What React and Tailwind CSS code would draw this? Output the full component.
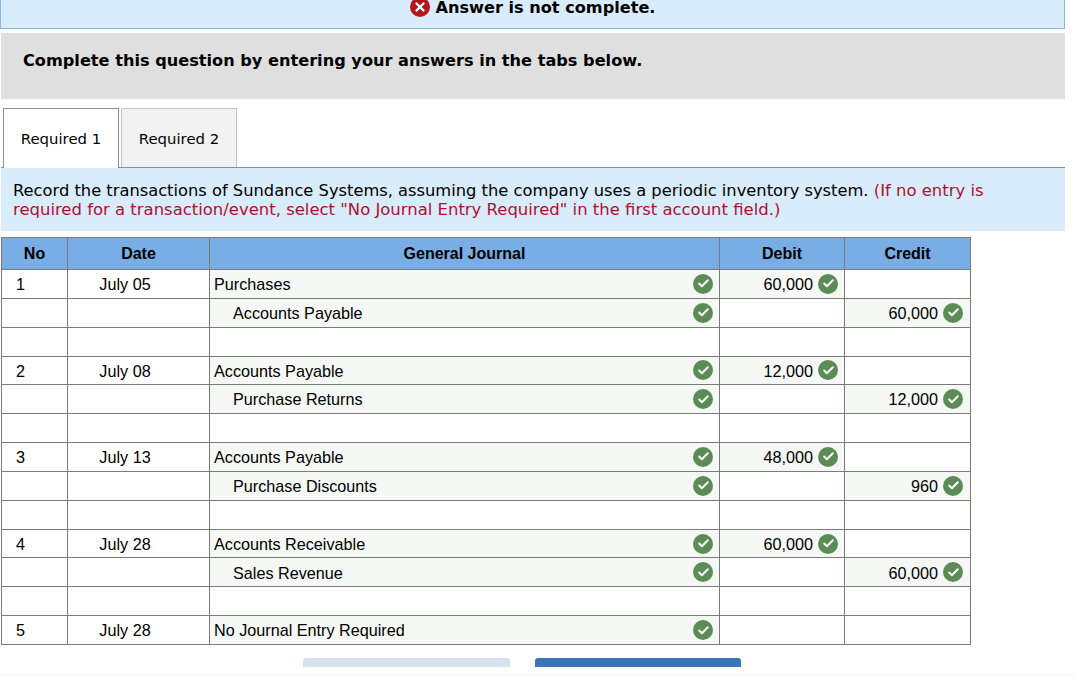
import { X, Check } from "lucide-react";

const entries = [
  { no: "1", date: "July 05", account: "Purchases", debit: "60,000" },
  { account: "Accounts Payable", indent: true, credit: "60,000" },
  {},
  { no: "2", date: "July 08", account: "Accounts Payable", debit: "12,000" },
  { account: "Purchase Returns", indent: true, credit: "12,000" },
  {},
  { no: "3", date: "July 13", account: "Accounts Payable", debit: "48,000" },
  { account: "Purchase Discounts", indent: true, credit: "960" },
  {},
  { no: "4", date: "July 28", account: "Accounts Receivable", debit: "60,000" },
  { account: "Sales Revenue", indent: true, credit: "60,000" },
  {},
  { no: "5", date: "July 28", account: "No Journal Entry Required" },
];

const OkIcon = () => (
  <span className="inline-flex h-[20px] w-[20px] shrink-0 items-center justify-center rounded-full bg-[#5b8c55]">
    <Check size={13} strokeWidth={3.5} className="text-white" />
  </span>
);

const AmountCell = ({ value, padding }) => (
  <td className={`border border-[#7b7b7b] p-0 ${value ? "bg-[#f5f8f4]" : ""}`}>
    {value && (
      <div className={`flex items-center justify-end gap-[5px] ${padding}`}>
        <span className="pt-[0.6px]">{value}</span>
        <OkIcon />
      </div>
    )}
  </td>
);

const App = () => {
  return (
    <div className="h-[677px] w-[1076px] overflow-hidden bg-white font-['Liberation_Sans',Arial,sans-serif] text-black">
      <div className="w-[1065px]">
        {/* result banner */}
        <div className="flex h-[29px] items-start justify-center border-x border-b border-[#8db8de] bg-[#d9ecfb] pl-[1px] font-['DejaVu_Sans',sans-serif] text-[16.15px] leading-[15px] font-bold">
          <span className="mr-[5px] inline-flex h-[20px] w-[20px] -translate-y-[3px] items-center justify-center rounded-full bg-[#b3161b]">
            <X size={14} strokeWidth={4} className="text-white" />
          </span>
          <span>Answer is not complete.</span>
        </div>

        <div className="mt-[4px] ml-[1px] flex h-[66px] items-center bg-[#dfdfdf] pb-[9px] pl-[22px] font-['DejaVu_Sans',sans-serif] text-[16.16px] font-bold">
          Complete this question by entering your answers in the tabs below.
        </div>

        {/* tabs */}
        <div className="mt-[9px] ml-[1px] flex h-[60px] gap-[2px] border-b border-[#8e8e8e] pl-[2px] font-['DejaVu_Sans',sans-serif] text-[14.9px]">
          <div className="-mb-[1px] flex h-[60px] w-[116px] items-center justify-center border-x border-t border-[#8e8e8e] bg-white pt-[2px]">
            Required 1
          </div>
          <div className="flex h-[59px] w-[116px] items-center justify-center border-x border-t border-[#c4c4c4] bg-[#f2f2f2] pt-[3px]">
            Required 2
          </div>
        </div>

        <div className="ml-[1px] h-[63px] bg-[#d9ecfb] pt-[13px] pr-[20px] pl-[12px] font-['DejaVu_Sans',sans-serif] text-[16.3px] leading-[19px]">
          Record the transactions of Sundance Systems, assuming the company uses a periodic inventory system.{" "}
          <span className="text-[16.47px] text-[#b01030]">
            (If no entry is required for a transaction/event, select "No Journal Entry Required" in the first account field.)
          </span>
        </div>

        {/* journal table */}
        <table className="mt-[6px] ml-[1px] w-[970px] table-fixed border-collapse text-[16.2px]">
          <colgroup>
            <col className="w-[66px]" />
            <col className="w-[142px]" />
            <col className="w-[510px]" />
            <col className="w-[125px]" />
            <col className="w-[126px]" />
          </colgroup>
          <thead>
            <tr className="h-[32px] bg-[#78ade6] text-[16px] font-bold">
              <th className="border border-[#7b7b7b] p-0">No</th>
              <th className="border border-[#7b7b7b] p-0">Date</th>
              <th className="border border-[#7b7b7b] p-0">General Journal</th>
              <th className="border border-[#7b7b7b] p-0">Debit</th>
              <th className="border border-[#7b7b7b] p-0">Credit</th>
            </tr>
          </thead>
          <tbody>
            {entries.map((row, index) => (
              <tr key={index} className="h-[28.85px]">
                <td className="border border-[#7b7b7b] p-0 pt-[0.6px] pl-[14px]">{row.no}</td>
                <td className="border border-[#7b7b7b] p-0 pt-[0.6px] pr-[27px] text-center">{row.date}</td>
                <td className={`border border-[#7b7b7b] p-0 ${row.account ? "bg-[#f5f8f4]" : ""}`}>
                  {row.account && (
                    <div className="flex items-center justify-between pr-[6px]">
                      <span className={`pt-[0.6px] ${row.indent ? "pl-[23px]" : "pl-[4px]"}`}>{row.account}</span>
                      <OkIcon />
                    </div>
                  )}
                </td>
                <AmountCell value={row.debit} padding="pr-[6px]" />
                <AmountCell value={row.credit} padding="pr-[7px]" />
              </tr>
            ))}
          </tbody>
        </table>

        {/* buttons, cut off by the bottom of the window */}
        <div className="mt-[13px] flex h-[9px] gap-[25px] pl-[303px]">
          <div className="w-[207px] rounded-t-[3px] bg-[#d6e2f0]" />
          <div className="w-[206px] rounded-t-[3px] bg-[#3a75b8]" />
        </div>
      </div>
      <div className="mt-[8px] h-[1px] bg-[#f3f3f3]" />
    </div>
  );
};

export default App;
